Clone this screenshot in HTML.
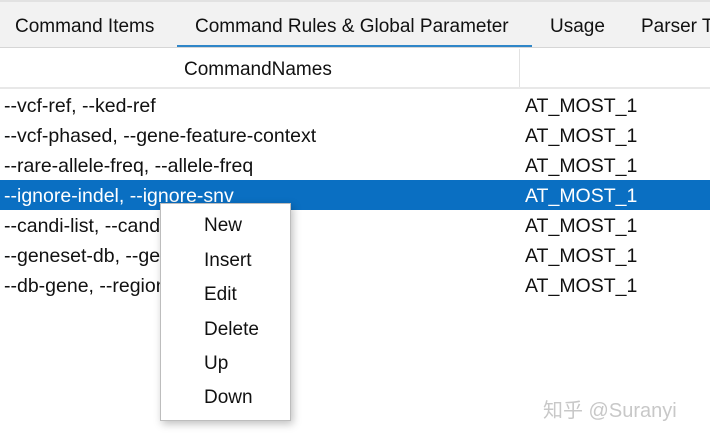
<!DOCTYPE html>
<html><head><meta charset="utf-8"><style>
body{margin:0;width:710px;height:440px;background:#fff;overflow:hidden;position:relative;font-family:"Liberation Sans","Noto Sans CJK SC",sans-serif;color:#111;}
.tabs{position:absolute;left:0;top:0;width:710px;height:48px;background:#f2f2f2;border-top:2px solid #e2e2e2;border-bottom:1px solid #d6d6d6;box-sizing:border-box;overflow:hidden;}
.tab{position:absolute;top:14px;font-size:19px;white-space:nowrap;}
.ul{position:absolute;left:177px;width:355px;top:43px;height:4px;background:#2f86c8;}
.hdr{position:absolute;top:49px;left:0;width:710px;height:40px;border-bottom:2px solid #e8e8e8;box-sizing:border-box;}
.hdr span{position:absolute;left:184px;top:10px;font-size:19px;}
.vd{position:absolute;left:519px;top:49px;width:1px;height:38px;background:#e2e2e2;}
.row{position:absolute;left:0;width:710px;height:30px;font-size:19.5px;overflow:hidden;}
.row span{position:absolute;top:5px;white-space:nowrap;}
.sel{background:#0a6fc2;color:#fff;}
.menu{position:absolute;left:160px;top:203px;width:129px;height:216px;background:#fff;border:1px solid #bdbdbd;box-shadow:2px 3px 8px rgba(0,0,0,.25);}
.menu div{position:absolute;left:43px;font-size:19px;}
.wm{position:absolute;left:543px;top:394px;font-size:20px;color:#c8c8c8;}
</style></head><body>
<div class="tabs">
<span class="tab" style="left:15px">Command Items</span>
<span class="tab" style="left:195px">Command Rules &amp; Global Parameter</span>
<span class="tab" style="left:550px">Usage</span>
<span class="tab" style="left:641px">Parser Tests</span>
<div class="ul"></div>
</div>
<div class="hdr"><span>CommandNames</span></div>
<div class="vd"></div>
<div class="row" style="top:90px"><span style="left:4px">--vcf-ref, --ked-ref</span><span style="left:525px">AT_MOST_1</span></div>
<div class="row" style="top:120px"><span style="left:4px">--vcf-phased, --gene-feature-context</span><span style="left:525px">AT_MOST_1</span></div>
<div class="row" style="top:150px"><span style="left:4px">--rare-allele-freq, --allele-freq</span><span style="left:525px">AT_MOST_1</span></div>
<div class="row sel" style="top:180px"><span style="left:4px">--ignore-indel, --ignore-snv</span><span style="left:525px">AT_MOST_1</span></div>
<div class="row" style="top:210px"><span style="left:4px">--candi-list, --candi-list</span><span style="left:525px">AT_MOST_1</span></div>
<div class="row" style="top:240px"><span style="left:4px">--geneset-db, --geneset</span><span style="left:525px">AT_MOST_1</span></div>
<div class="row" style="top:270px"><span style="left:4px">--db-gene, --region</span><span style="left:525px">AT_MOST_1</span></div>
<div class="menu">
<div style="top:11px">New</div>
<div style="top:46px">Insert</div>
<div style="top:80px">Edit</div>
<div style="top:115px">Delete</div>
<div style="top:149px">Up</div>
<div style="top:183px">Down</div>
</div>
<div class="wm">知乎 @Suranyi</div>
</body></html>
